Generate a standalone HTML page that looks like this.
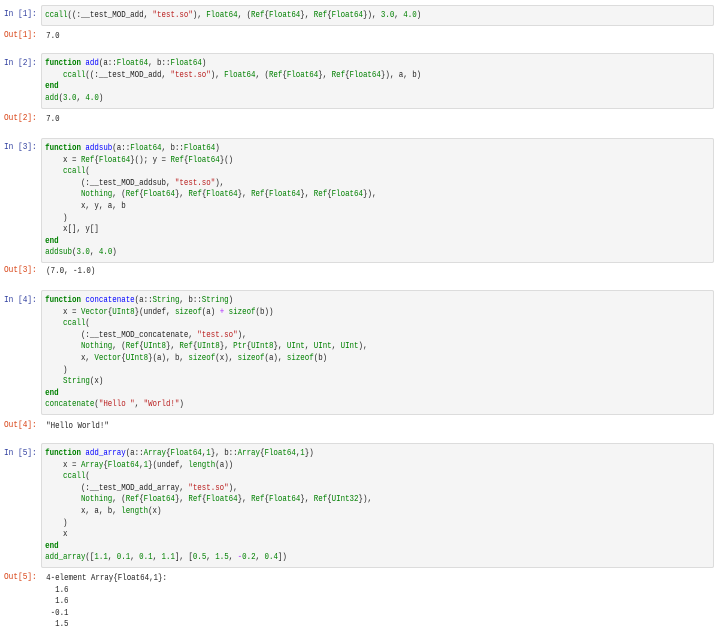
<!DOCTYPE html>
<html><head><style>
body{margin:0;background:#fff;width:720px;height:635px;overflow:hidden;position:relative;font-family:"Liberation Mono",monospace;font-size:9.5px;color:#222}
.p{position:absolute;left:4px;line-height:11.6px;white-space:pre;transform:scaleX(0.82);transform-origin:0 0}
.in{color:#303f9f}.out{color:#d84315}
.box{position:absolute;left:41px;width:671px;background:#f5f5f5;border:1px solid #dcdcdc;border-radius:2px}
pre{margin:0;padding:3px 0 3px 4px;font-family:inherit;font-size:inherit;line-height:11.6px;transform:scaleX(0.785);transform-origin:0 0;white-space:pre}
.o{position:absolute;left:43px;top:0}
.k{color:#008000;font-weight:bold}.f{color:#0000ff}.s{color:#ba2121}.t{color:#008000}.n{color:#008000}.b{color:#008000}.op{color:#aa22ff}
</style></head><body>
<div class="p in" style="top:8px">In [1]:</div>
<div class="box" style="top:5px;height:19px"><pre><span class="b">ccall</span>((:__test_MOD_add, <span class="s">"test.so"</span>), <span class="t">Float64</span>, (<span class="t">Ref</span>{<span class="t">Float64</span>}, <span class="t">Ref</span>{<span class="t">Float64</span>}), <span class="n">3.0</span>, <span class="n">4.0</span>)</pre></div>
<div class="p out" style="top:29px">Out[1]:</div><pre class="o" style="top:27px">7.0</pre>

<div class="p in" style="top:57px">In [2]:</div>
<div class="box" style="top:53px;height:54px"><pre><span class="k">function</span> <span class="f">add</span>(a::<span class="t">Float64</span>, b::<span class="t">Float64</span>)
    <span class="b">ccall</span>((:__test_MOD_add, <span class="s">"test.so"</span>), <span class="t">Float64</span>, (<span class="t">Ref</span>{<span class="t">Float64</span>}, <span class="t">Ref</span>{<span class="t">Float64</span>}), a, b)
<span class="k">end</span>
<span class="b">add</span>(<span class="n">3.0</span>, <span class="n">4.0</span>)</pre></div>
<div class="p out" style="top:112px">Out[2]:</div><pre class="o" style="top:110px">7.0</pre>

<div class="p in" style="top:141px">In [3]:</div>
<div class="box" style="top:138px;height:123px"><pre><span class="k">function</span> <span class="f">addsub</span>(a::<span class="t">Float64</span>, b::<span class="t">Float64</span>)
    x = <span class="t">Ref</span>{<span class="t">Float64</span>}(); y = <span class="t">Ref</span>{<span class="t">Float64</span>}()
    <span class="b">ccall</span>(
        (:__test_MOD_addsub, <span class="s">"test.so"</span>),
        <span class="t">Nothing</span>, (<span class="t">Ref</span>{<span class="t">Float64</span>}, <span class="t">Ref</span>{<span class="t">Float64</span>}, <span class="t">Ref</span>{<span class="t">Float64</span>}, <span class="t">Ref</span>{<span class="t">Float64</span>}),
        x, y, a, b
    )
    x[], y[]
<span class="k">end</span>
<span class="b">addsub</span>(<span class="n">3.0</span>, <span class="n">4.0</span>)</pre></div>
<div class="p out" style="top:264px">Out[3]:</div><pre class="o" style="top:262px">(7.0, -1.0)</pre>

<div class="p in" style="top:294px">In [4]:</div>
<div class="box" style="top:290px;height:123px"><pre><span class="k">function</span> <span class="f">concatenate</span>(a::<span class="t">String</span>, b::<span class="t">String</span>)
    x = <span class="t">Vector</span>{<span class="t">UInt8</span>}(undef, <span class="b">sizeof</span>(a) <span class="op">+</span> <span class="b">sizeof</span>(b))
    <span class="b">ccall</span>(
        (:__test_MOD_concatenate, <span class="s">"test.so"</span>),
        <span class="t">Nothing</span>, (<span class="t">Ref</span>{<span class="t">UInt8</span>}, <span class="t">Ref</span>{<span class="t">UInt8</span>}, <span class="t">Ptr</span>{<span class="t">UInt8</span>}, <span class="t">UInt</span>, <span class="t">UInt</span>, <span class="t">UInt</span>),
        x, <span class="t">Vector</span>{<span class="t">UInt8</span>}(a), b, <span class="b">sizeof</span>(x), <span class="b">sizeof</span>(a), <span class="b">sizeof</span>(b)
    )
    <span class="t">String</span>(x)
<span class="k">end</span>
<span class="b">concatenate</span>(<span class="s">"Hello "</span>, <span class="s">"World!"</span>)</pre></div>
<div class="p out" style="top:419px">Out[4]:</div><pre class="o" style="top:417px">"Hello World!"</pre>

<div class="p in" style="top:447px">In [5]:</div>
<div class="box" style="top:443px;height:123px"><pre><span class="k">function</span> <span class="f">add_array</span>(a::<span class="t">Array</span>{<span class="t">Float64</span>,<span class="n">1</span>}, b::<span class="t">Array</span>{<span class="t">Float64</span>,<span class="n">1</span>})
    x = <span class="t">Array</span>{<span class="t">Float64</span>,<span class="n">1</span>}(undef, <span class="b">length</span>(a))
    <span class="b">ccall</span>(
        (:__test_MOD_add_array, <span class="s">"test.so"</span>),
        <span class="t">Nothing</span>, (<span class="t">Ref</span>{<span class="t">Float64</span>}, <span class="t">Ref</span>{<span class="t">Float64</span>}, <span class="t">Ref</span>{<span class="t">Float64</span>}, <span class="t">Ref</span>{<span class="t">UInt32</span>}),
        x, a, b, <span class="b">length</span>(x)
    )
    x
<span class="k">end</span>
<span class="b">add_array</span>([<span class="n">1.1</span>, <span class="n">0.1</span>, <span class="n">0.1</span>, <span class="n">1.1</span>], [<span class="n">0.5</span>, <span class="n">1.5</span>, <span class="op">-</span><span class="n">0.2</span>, <span class="n">0.4</span>])</pre></div>
<div class="p out" style="top:571px">Out[5]:</div><pre class="o" style="top:569px">4-element Array{Float64,1}:
  1.6
  1.6
 -0.1
  1.5</pre>
</body></html>
